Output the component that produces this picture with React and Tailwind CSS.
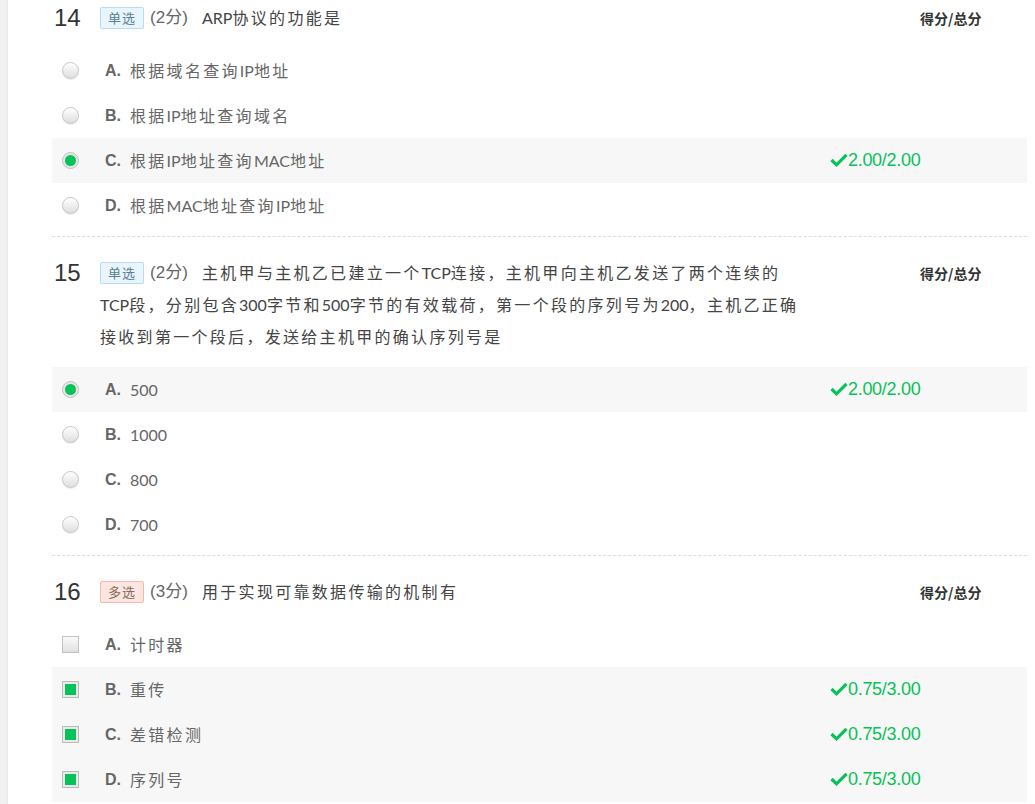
const questions = [
  {
    no: 14,
    type: "单选",
    multi: false,
    points: "(2分)",
    title: ["ARP协议的功能是"],
    options: [
      { key: "A", text: "根据域名查询IP地址" },
      { key: "B", text: "根据IP地址查询域名" },
      { key: "C", text: "根据IP地址查询MAC地址", checked: true, score: "2.00/2.00" },
      { key: "D", text: "根据MAC地址查询IP地址" },
    ],
  },
  {
    no: 15,
    type: "单选",
    multi: false,
    points: "(2分)",
    title: [
      "主机甲与主机乙已建立一个TCP连接，主机甲向主机乙发送了两个连续的",
      "TCP段，分别包含300字节和500字节的有效载荷，第一个段的序列号为200，主机乙正确",
      "接收到第一个段后，发送给主机甲的确认序列号是",
    ],
    options: [
      { key: "A", text: "500", checked: true, score: "2.00/2.00" },
      { key: "B", text: "1000" },
      { key: "C", text: "800" },
      { key: "D", text: "700" },
    ],
  },
  {
    no: 16,
    type: "多选",
    multi: true,
    points: "(3分)",
    title: ["用于实现可靠数据传输的机制有"],
    options: [
      { key: "A", text: "计时器" },
      { key: "B", text: "重传", checked: true, score: "0.75/3.00" },
      { key: "C", text: "差错检测", checked: true, score: "0.75/3.00" },
      { key: "D", text: "序列号", checked: true, score: "0.75/3.00" },
    ],
  },
];

// latin runs stay tight, chinese runs get the wider spacing
function Mixed({ text }) {
  return text.split(/([A-Za-z0-9]+)/).map((part, i) =>
    /^[A-Za-z0-9]+$/.test(part) ? (
      <span key={i} className="tracking-normal">{part}</span>
    ) : (
      <span key={i} className="tracking-[2.3px]">{part}</span>
    )
  );
}

function Radio({ checked }) {
  if (checked) {
    return (
      <span className="w-[17px] h-[17px] rounded-full border border-[#c2c2c2] bg-[#e6e6e6] p-[2px] flex">
        <span className="flex-1 rounded-full bg-[#06c258]" />
      </span>
    );
  }
  return (
    <span className="w-[17px] h-[17px] rounded-full border border-[#c6c6c6] bg-gradient-to-b from-white to-[#dedede] shadow-[0_1px_1px_rgba(0,0,0,0.08)]" />
  );
}

function Checkbox({ checked }) {
  if (checked) {
    return (
      <span className="w-[17px] h-[17px] border border-[#bbbbbb] bg-[#eaeaea] p-[2px] flex">
        <span className="flex-1 bg-[#06c258]" />
      </span>
    );
  }
  return <span className="w-[17px] h-[17px] border border-[#c2c2c2] bg-gradient-to-b from-[#fafafa] to-[#e0e0e0]" />;
}

function Check() {
  return (
    <svg viewBox="0 0 18 14" className="w-[18px] h-[14px] mt-[-2px]">
      <path d="M1.5 7 L6.5 11.8 L16.5 1.8" fill="none" stroke="#06c258" strokeWidth="3.2" strokeLinejoin="miter" />
    </svg>
  );
}

function Question({ q, first }) {
  return (
    <div className={`${first ? "pt-[2px]" : "pt-[20px]"} pb-[8px] border-b border-dashed border-[#dcdcdc]`}>
      <div className="flex">
        <div className="w-[48px] h-[32px] pl-[2px] flex items-center text-[24px] text-[#333] font-['Liberation_Sans',sans-serif]">
          {q.no}
        </div>
        <div className="flex-1 text-[16px] text-[#444] font-['Lato','Noto_Sans_CJK_SC',sans-serif]">
          <div className="h-[32px] flex items-center whitespace-nowrap">
            <span
              className={`h-[22px] leading-[20px] px-[7px] text-[13px] tracking-[1px] rounded-[2px] border ${
                q.multi ? "bg-[#fde6df] border-[#f7b9a6] text-[#8a6a60]" : "bg-[#e8f5fd] border-[#b5def4] text-[#5b7f93]"
              }`}
            >
              {q.type}
            </span>
            <span className="w-[52px] ml-[6px] text-[17px] text-[#666] font-['Liberation_Sans','Noto_Sans_CJK_SC',sans-serif]">
              {q.points}
            </span>
            <span>
              <Mixed text={q.title[0]} />
            </span>
          </div>
          {q.title.slice(1).map((line, i) => (
            <div key={i} className="h-[32px] flex items-center whitespace-nowrap">
              <span>
                <Mixed text={line} />
              </span>
            </div>
          ))}
        </div>
        <div className="w-[197px] h-[32px] pl-[90px] flex items-center text-[14px] font-bold text-[#333] font-['Noto_Sans_CJK_SC',sans-serif]">
          得分/总分
        </div>
      </div>
      <div className="mt-[14px]">
        {q.options.map((o) => (
          <div key={o.key} className={`h-[45px] flex items-center ${o.checked ? "bg-[#f7f7f7]" : ""}`}>
            <div className="flex-1 flex items-center">
              <span className="w-[53px] pl-[10px] flex">{q.multi ? <Checkbox checked={o.checked} /> : <Radio checked={o.checked} />}</span>
              <span className="w-[25px] text-[16px] font-bold text-[#666] font-['Liberation_Sans',sans-serif]">{o.key}.</span>
              <span className="text-[16px] text-[#666] font-['Lato','Noto_Sans_CJK_SC',sans-serif]">
                <Mixed text={o.text} />
              </span>
            </div>
            <div className="w-[197px] flex items-center">
              {o.score && (
                <>
                  <Check />
                  <span className="text-[18px] tracking-[-0.3px] text-[#06c258] font-['Liberation_Sans',sans-serif]">{o.score}</span>
                </>
              )}
            </div>
          </div>
        ))}
      </div>
    </div>
  );
}

export default function App() {
  return (
    <div className="h-screen overflow-hidden flex bg-white">
      <div className="w-[8px] bg-[#f1f1f1] border-r border-[#ebebeb]" />
      <div className="flex-1 pl-[44px] pr-[8px]">
        {questions.map((q, i) => (
          <Question key={q.no} q={q} first={i === 0} />
        ))}
      </div>
    </div>
  );
}
